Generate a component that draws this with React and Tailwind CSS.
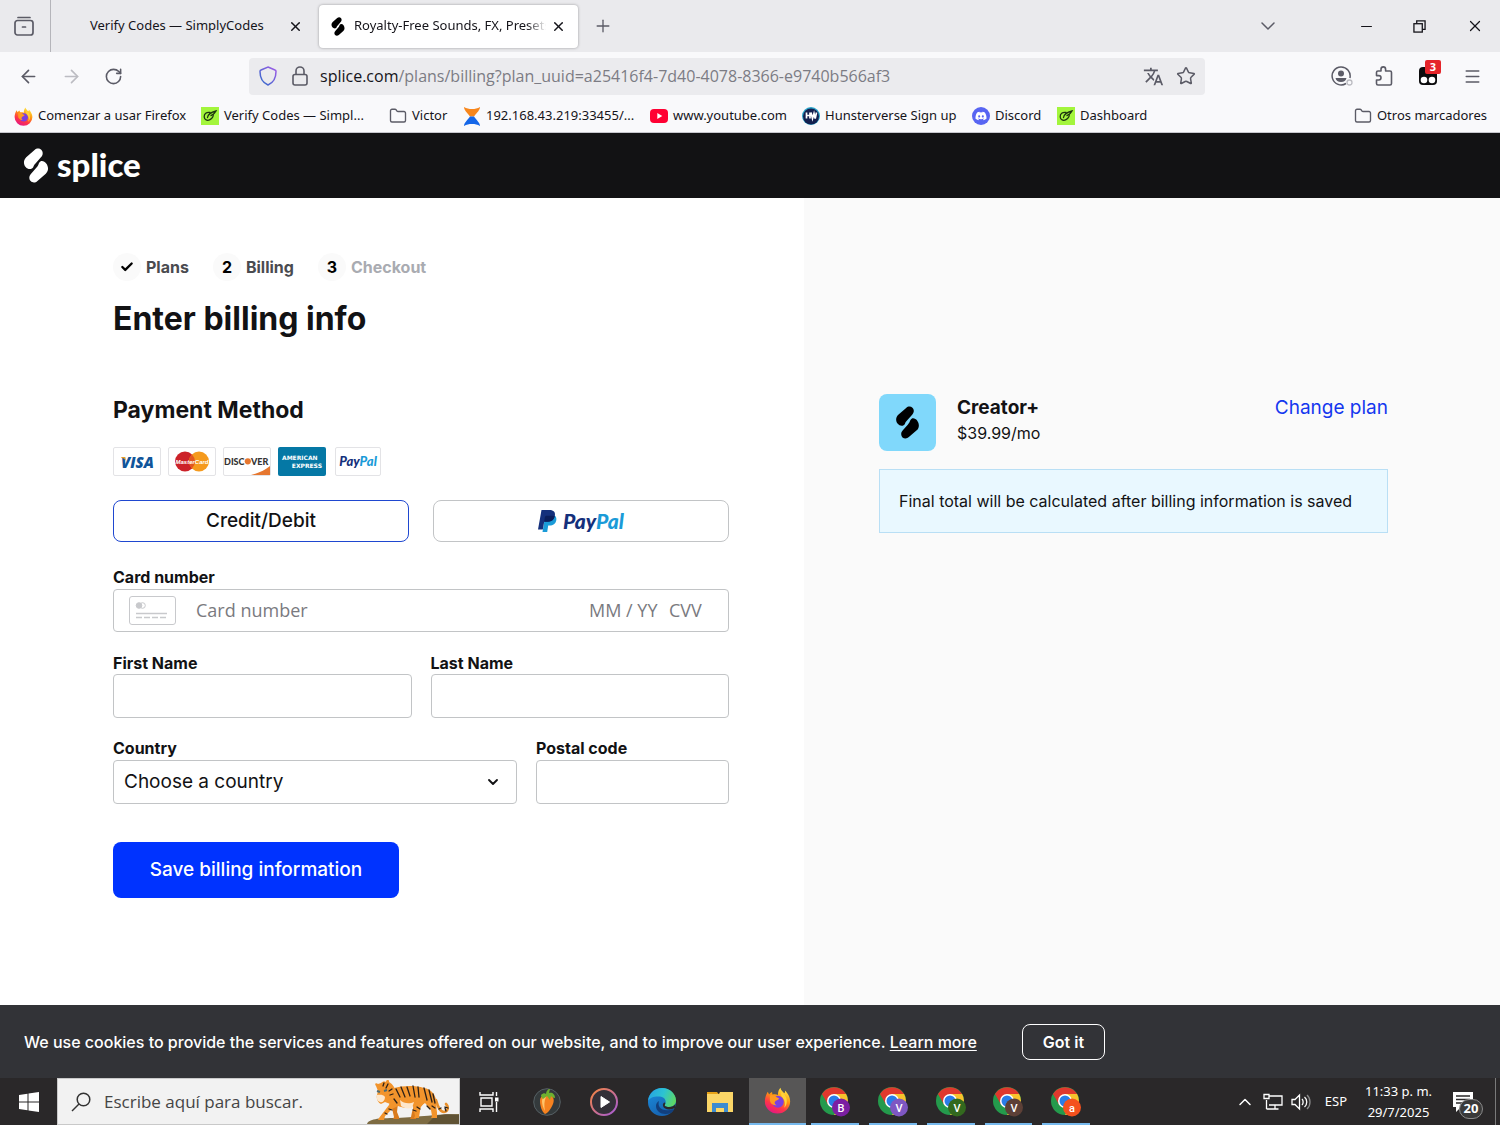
import React from "react";
import { ArrowLeft, ArrowRight, ChevronDown, ChevronUp, Folder, Menu, Minus, Plus, RotateCw, Star, X, Check } from "lucide-react";
import { FaDiscord } from "react-icons/fa";
import { MdTranslate } from "react-icons/md";

const ui = "font-['Noto_Sans','Open_Sans',sans-serif]";

function SpliceMark({ className }) {
  return (
    <svg viewBox="0 0 24 34" className={className} fill="currentColor" aria-hidden="true">
      <path d="M10.600 2C13.500-.9 18.500.8 18.500 5c0 1.600-.6 2.800-1.700 4l-5.300 6C8.500 18 10.500 19 7 20.300 3.500 21 .3 17.800.3 14c0-2 .8-3.700 2.200-5.100z" />
      <path d="M13.400 32C10.500 34.900 5.500 33.200 5.500 29c0-1.600.6-2.800 1.700-4l5.300-6C15.500 16 13.500 15 17 12.700c3.500-.7 6.700 3.500 6.700 7.300 0 2-.8 3.700-2.200 5.100z" />
    </svg>
  );
}

function FirefoxIcon({ className, id }) {
  return (
    <svg viewBox="0 0 32 32" className={className} aria-hidden="true">
      <defs>
        <linearGradient id={id} x1="0.8" y1="0" x2="0.3" y2="1">
          <stop offset="0" stopColor="#fff44f" />
          <stop offset="0.4" stopColor="#ff980e" />
          <stop offset="0.7" stopColor="#ff3647" />
          <stop offset="1" stopColor="#e31587" />
        </linearGradient>
      </defs>
      <path fill={`url(#${id})`} d="M19.500 1c.5 3 2.600 4.400 4.500 6.300 1-.9 1-2.300.8-3.300 3.400 3 6.200 8 6.200 13A15 14.500 0 0 1 16 31.500 15 14.500 0 0 1 1 17C1 12 3 8 4.500 5.500L6 9c1-1.500 2-2.300 3.500-3L10 9c2-.5 4.500-.5 6.500.5 0-3.500 1-6.500 3-8.500z" />
      <circle cx="16.500" cy="17.500" r="7" fill="#7b3fe0" />
      <path fill="#ff9a20" d="M7 10c3-1 6 0 8 2l3 1.500c-1 2-4 2-5 4-1 1.500 0 3.500 2 4-4 1-8-2-8-6z" />
      <path fill="#ffd23a" d="M21 6c4 3 6.500 7 6 12-.3 3-1.500 5-3 6.500 1.500-4 1-9-2-12-2-2-2-4.500-1-6.500z" />
    </svg>
  );
}

function LeafBadge() {
  return (
    <svg viewBox="0 0 18 18" className="size-[18px]" aria-hidden="true">
      <rect width="18" height="18" fill="#a3f53c" />
      <g fill="none" stroke="#1d3510" strokeWidth="1.300" strokeLinecap="round">
        <path d="M9 5.500C5.500 4.800 3 7 3.200 10c.2 2.800 3 4.200 5.800 2.600 2.500-1.500 3.400-3.500 3.200-5" />
        <path d="M6.500 10.500c.5-3.500 3.500-5.300 8.500-6.500-1 2-2.500 3.700-5 4.700" />
      </g>
    </svg>
  );
}

const bookmarks = [
  { label: "Comenzar a usar Firefox", icon: <FirefoxIcon id="ff-bookmark" className="size-[19px]" />, w: "w-[187px]" },
  { label: "Verify Codes — Simpl...", icon: <LeafBadge />, w: "w-[188px]" },
  { label: "Victor", icon: <Folder className="size-[18px] text-[#5b5b66]" strokeWidth={1.8} />, w: "w-[74px]" },
  {
    label: "192.168.43.219:33455/...",
    icon: (
      <svg viewBox="0 0 18 19" className="h-[19px] w-[18px]" aria-hidden="true">
        <path fill="#f7861c" d="M1 0c2.500 1.500 5 2 8 2s5.500-.5 8-2c0 3-3 5.500-6 9.500H7C4 5.500 1 3 1 0z" />
        <path fill="#1466e8" d="M1 19c2.500-1.500 5-2 8-2s5.500.5 8 2c0-3-3-5.500-6-9.500H7C4 13.500 1 16 1 19z" />
      </svg>
    ),
    w: "w-[187px]",
  },
  {
    label: "www.youtube.com",
    icon: (
      <svg viewBox="0 0 18 14" className="h-[14px] w-[18px]" aria-hidden="true">
        <rect width="18" height="14" rx="4" fill="#ff0033" />
        <path d="M7.300 4v6l5-3z" fill="#fff" />
      </svg>
    ),
    w: "w-[152px]",
  },
  {
    label: "Hunsterverse Sign up",
    icon: (
      <svg viewBox="0 0 18 18" className="size-[18px]" aria-hidden="true">
        <circle cx="9" cy="9" r="9" fill="#2aa3c9" />
        <circle cx="9" cy="9.500" r="8" fill="#14204f" />
        <path d="M4.500 5.500v6M8 5.500v6M4.500 8.500H8M9 5.500l1.500 6 1.500-5 1.200 5 1.300-6" stroke="#fff" strokeWidth="1.700" fill="none" />
      </svg>
    ),
    w: "w-[170px]",
  },
  {
    label: "Discord",
    icon: (
      <span className="flex size-[18px] items-center justify-center rounded-full bg-[#5865f2] text-white">
        <FaDiscord className="size-3" />
      </span>
    ),
    w: "w-[85px]",
  },
  { label: "Dashboard", icon: <LeafBadge />, w: "w-[100px]" },
];

function BrowserChrome() {
  return (
    <div className={`${ui} text-[#15141a]`}>
      <div className="flex h-[52px] items-center bg-[#eaeaed]">
        <button aria-label="Recent" className="flex h-full w-[51px] items-center justify-center border-r border-[#b5b5ba] pr-[2px] text-[#5b5b66]">
          <svg viewBox="0 0 20 20" className="size-5" fill="none" stroke="currentColor" strokeWidth="1.700" strokeLinecap="round" aria-hidden="true">
            <path d="M4 1.500h12" />
            <rect x="1" y="4.500" width="18" height="14.500" rx="2.500" />
            <path d="M8.500 11h3" />
          </svg>
        </button>
        <div className="flex h-11 w-[268px] items-center justify-between pr-4 pl-[39px]">
          <span className="text-[13px] whitespace-nowrap">Verify Codes — SimplyCodes</span>
          <button aria-label="Close tab"><X className="size-[15px]" strokeWidth={2.4} /></button>
        </div>
        <div className="flex h-[43px] w-[259px] items-center rounded-[4px] bg-white pr-3 pl-3 shadow-[0_0_3px_rgba(0,0,0,0.35)]">
          <SpliceMark className="h-[19px] w-[14px] shrink-0 text-black" />
          <span className="ml-[9px] w-[197px] overflow-hidden [mask-image:linear-gradient(to_right,black_90%,transparent)] text-[13px] whitespace-nowrap">Royalty-Free Sounds, FX, Presets</span>
          <button aria-label="Close tab" className="ml-[5px]"><X className="size-[15px]" strokeWidth={2.4} /></button>
        </div>
        <button aria-label="New tab" className="ml-[15px] text-[#5b5b66]"><Plus className="size-5" strokeWidth={1.6} /></button>
        <div className="ml-auto flex items-center">
          <button aria-label="List tabs" className="mr-[78px] text-[#5b5b66]"><ChevronDown className="size-6" strokeWidth={1.5} /></button>
          <button aria-label="Minimize" className="flex w-[54px] justify-start"><Minus className="size-[17px]" strokeWidth={1.5} /></button>
          <button aria-label="Restore" className="flex w-[54px] justify-start pl-px">
            <svg viewBox="0 0 14 14" className="size-[13px]" fill="none" stroke="currentColor" strokeWidth="1.400" aria-hidden="true">
              <rect x="1" y="4" width="9" height="9" />
              <path d="M4 4V1h9v9h-3" />
            </svg>
          </button>
          <button aria-label="Close window" className="mr-4"><X className="size-[18px]" strokeWidth={1.6} /></button>
        </div>
      </div>

      <div className="flex h-12 items-center bg-[#f9f9fb] text-[#5b5b66]">
        <div className="flex w-[249px] items-center gap-[22px] pl-[18px]">
          <button aria-label="Back"><ArrowLeft className="size-[21px]" strokeWidth={1.9} /></button>
          <button aria-label="Forward" className="text-[#bcbcc2]"><ArrowRight className="size-[21px]" strokeWidth={1.9} /></button>
          <button aria-label="Reload"><RotateCw className="size-[19px]" strokeWidth={2} /></button>
        </div>
        <div className="flex h-[37px] w-[956px] items-center rounded-[4px] bg-[#ebebee] pr-[9px] pl-[10px]">
          <svg viewBox="0 0 18 20" className="h-5 w-[18px]" fill="none" strokeWidth="1.500" aria-hidden="true">
            <defs>
              <linearGradient id="shield" x1="1" y1="0" x2="0" y2="1">
                <stop offset="0" stopColor="#a35be8" />
                <stop offset="1" stopColor="#2c6cc8" />
              </linearGradient>
            </defs>
            <path stroke="url(#shield)" d="M9 1l7 3c1 .4 1 1 1 1.600C17 12 14 17 9 19 4 17 1 12 1 5.600 1 5 1 4.400 2 4z" />
          </svg>
          <svg viewBox="0 0 16 20" className="ml-[15px] h-5 w-4" fill="none" stroke="currentColor" strokeWidth="1.600" aria-hidden="true">
            <rect x="1" y="8.500" width="14" height="10.500" rx="2" />
            <path d="M4 8.500V5a4 4 0 0 1 8 0v3.500" />
          </svg>
          <div className="ml-3 flex-1 font-['Open_Sans',sans-serif] text-[16px] whitespace-nowrap text-[#7c7c84]" role="textbox" aria-label="Address">
            <span className="text-[#15141a]">splice.com</span>/plans/billing?plan_uuid=a25416f4-7d40-4078-8366-e9740b566af3
          </div>
          <button aria-label="Translate page"><MdTranslate className="size-[21px]" /></button>
          <button aria-label="Bookmark page" className="ml-3"><Star className="size-5" strokeWidth={1.8} /></button>
        </div>
        <div className="ml-auto flex items-center pr-[18px]">
          <button aria-label="Account">
            <svg viewBox="0 0 22 20" className="h-5 w-[22px]" fill="none" stroke="currentColor" strokeWidth="1.500" aria-hidden="true">
              <path d="M15 17.500A9 9 0 1 1 18.900 12" />
              <circle cx="10" cy="7.500" r="3" fill="currentColor" stroke="none" />
              <path d="M4.500 12h11c-.5 2.500-2.500 4-5.500 4s-5-1.500-5.500-4z" fill="currentColor" stroke="none" />
              <circle cx="18.500" cy="16.500" r="2.500" stroke="#bcbcc2" strokeWidth="1.300" />
            </svg>
          </button>
          <button aria-label="Extensions" className="ml-[22px]">
            <svg viewBox="0 0 18 20" className="h-5 w-[18px]" fill="none" stroke="currentColor" strokeWidth="1.600" strokeLinejoin="round" aria-hidden="true">
              <path d="M1.500 6.500c0-1 .5-1.500 1.500-1.500h3V3.200a2.300 2.300 0 0 1 4.600 0V5H15c1 0 1.500.5 1.500 1.500V17.500c0 1-.5 1.500-1.500 1.500H3c-1 0-1.500-.5-1.500-1.500V14h2.300a2.200 2.200 0 0 0 0-4.400H1.500z" />
            </svg>
          </button>
          <button aria-label="Container extension" className="relative ml-[26px]">
            <svg viewBox="0 0 18 18" className="size-[18px]" aria-hidden="true">
              <rect width="18" height="18" rx="4" fill="#0c0c0d" />
              <circle cx="5" cy="13" r="3.300" fill="#fff" />
              <circle cx="13" cy="13" r="3.300" fill="#fff" />
            </svg>
            <span className="absolute -top-[7px] left-[6px] flex h-[14px] w-4 items-center justify-center rounded-[2px] bg-[#e5252a] text-[11px] font-bold text-white">3</span>
          </button>
          <button aria-label="Menu" className="ml-[26px]"><Menu className="size-[19px]" strokeWidth={1.7} /></button>
        </div>
      </div>

      <nav aria-label="Bookmarks" className="flex h-[33px] items-center border-b border-[#c6c6cc] bg-[#f9f9fb] pl-[14px] text-[13px]">
        {bookmarks.map((b, i) => (
          <a key={i} href="#bookmark" className={`flex items-center gap-[5px] whitespace-nowrap ${b.w}`}>
            {b.icon}
            {b.label}
          </a>
        ))}
        <a href="#others" className="mr-[13px] ml-auto flex items-center gap-[5px] whitespace-nowrap">
          <Folder className="size-[18px] text-[#5b5b66]" strokeWidth={1.8} />
          Otros marcadores
        </a>
      </nav>
    </div>
  );
}

function PayPalWord({ className }) {
  return (
    <span className={`font-['Lato',sans-serif] font-black italic ${className}`}>
      <span className="text-[#14307c]">Pay</span>
      <span className="text-[#1a9bd8]">Pal</span>
    </span>
  );
}

function CardLogos() {
  const box = "flex h-[29px] items-center justify-center rounded-[2px] border border-[#e3e3e6] bg-white";
  return (
    <div className="mt-[21px] flex gap-[7px]">
      <div className={`${box} w-12`}>
        <svg viewBox="0 0 46 27" className="h-[27px] w-[46px]" role="img" aria-label="Visa">
          <text x="7" y="20" fontFamily="Open Sans, sans-serif" fontSize="15" fontWeight="800" fontStyle="italic" fill="#10559a">VISA</text>
          <path d="M7 9h4l1.500 4.500C11.500 11 9.500 9.700 7 9.400z" fill="#f0a020" />
        </svg>
      </div>
      <div className={`${box} w-12`}>
        <svg viewBox="0 0 46 27" className="h-[27px] w-[46px]" role="img" aria-label="MasterCard">
          <circle cx="16" cy="13.500" r="10" fill="#cc2229" />
          <circle cx="30" cy="13.500" r="10" fill="#f59a1d" />
          <path d="M23 6.400a10 10 0 0 1 0 14.200 10 10 0 0 1 0-14.200z" fill="#e2571f" />
          <text x="23" y="15.500" textAnchor="middle" fontFamily="Liberation Sans, sans-serif" fontSize="6" fontWeight="700" fontStyle="italic" fill="#fff">MasterCard</text>
        </svg>
      </div>
      <div className={`${box} w-12`}>
        <svg viewBox="0 0 46 27" className="h-[27px] w-[46px]" role="img" aria-label="Discover">
          <path d="M46 18v9H27c8-2 14-5 19-9z" fill="#e6772f" />
          <g fontFamily="Lato, sans-serif" fontSize="9" fontWeight="900" fill="#333">
            <text x="20.500" y="16.500" textAnchor="end">DISC</text>
            <text x="27" y="16.500">VER</text>
          </g>
          <circle cx="23.800" cy="13.300" r="3.100" fill="#e6772f" />
        </svg>
      </div>
      <div className="flex h-[29px] w-12 items-center justify-center rounded-[2px] bg-[#0578a5]">
        <svg viewBox="0 0 48 29" className="h-[29px] w-12" role="img" aria-label="American Express">
          <g fontFamily="DejaVu Sans, sans-serif" fontSize="6" fontWeight="700" fill="#fff">
            <text x="4" y="13">AMERICAN</text>
            <text x="44" y="21" textAnchor="end">EXPRESS</text>
          </g>
        </svg>
      </div>
      <div className={`${box} ml-[2px] w-[46px]`}>
        <PayPalWord className="text-[13px]" />
      </div>
    </div>
  );
}

const label = "block text-[16px] leading-5 font-bold text-[#121214]";
const field = "block h-11 w-full rounded-[4px] border border-[#c2c4c6] bg-white px-[10px] text-[19px]";
const stepBadge = "mr-[5px] flex size-7 items-center justify-center rounded-full bg-[#fafafa] text-black";

function BillingForm() {
  return (
    <form className="text-[#121214]" onSubmit={(e) => e.preventDefault()}>
      <ol className="flex items-center text-[16px] leading-7 font-bold">
        <li className="flex items-center text-[#4a4b50]">
          <span className={stepBadge}><Check className="size-[14px]" strokeWidth={4} /></span>
          Plans
        </li>
        <li className="ml-6 flex items-center text-[#4a4b50]">
          <span className={stepBadge}>2</span>
          Billing
        </li>
        <li className="ml-6 flex items-center text-[#a9abb1]">
          <span className={stepBadge}>3</span>
          Checkout
        </li>
      </ol>
      <h1 className="mt-[17px] text-[32px] leading-[42px] font-bold">Enter billing info</h1>
      <h2 className="mt-[54px] text-[23px] leading-8 font-bold">Payment Method</h2>
      <CardLogos />
      <div className="mt-6 grid grid-cols-2 gap-6">
        <button type="button" className="h-[42px] rounded-[8px] border border-[#1f47d0] text-[19px] font-medium">Credit/Debit</button>
        <button type="button" aria-label="PayPal" className="flex h-[42px] items-center justify-center gap-[6px] rounded-[8px] border border-[#c2c4c6]">
          <svg viewBox="0 0 19 22" className="h-[22px] w-[19px]" aria-hidden="true">
            <path fill="#1a9bd8" d="M16.500 5.500c1.600 1 2.200 2.600 1.800 4.700-.8 3.700-3.200 5.300-6.600 5.300h-1.500L9.200 22H4.500l2-12z" />
            <path fill="#14307c" d="M3.500 0h8c4.200 0 6 2.200 5.400 5.600-.7 4.200-3.600 6.200-7.600 6.200H6.200L4.800 19.500H0z" />
            <path fill="#0b1f5c" d="M6.800 7.500c.2-1.300.8-1.800 2-1.800h5.500c1 0 1.800.2 2.400.5-.8 3.700-3.500 5.600-7.400 5.600H6.200z" />
          </svg>
          <PayPalWord className="text-[21px] leading-[22px]" />
        </button>
      </div>

      <label htmlFor="card" className={`${label} mt-[25px]`}>Card number</label>
      <div className="mt-[2px] flex h-[43px] items-center rounded-[4px] border border-[#c2c4c6] bg-white px-[15px] font-['Open_Sans',sans-serif] text-[18px]">
        <svg viewBox="0 0 47 29" className="h-[29px] w-[47px] shrink-0" fill="none" stroke="#c8c9cc" aria-hidden="true">
          <rect x="0.500" y="0.500" width="46" height="28" rx="2.500" strokeWidth="1" />
          <circle cx="10" cy="9.500" r="2.800" fill="#c8c9cc" />
          <circle cx="13.500" cy="9.500" r="2.800" />
          <path d="M7 17.500h31" strokeWidth="1.500" />
          <path d="M7 21.500h31" strokeWidth="1.300" strokeDasharray="6 2" />
        </svg>
        <input id="card" placeholder="Card number" className="ml-5 min-w-0 flex-1 outline-none placeholder:text-[#7a7a80]" />
        <input aria-label="Expiration date" placeholder="MM / YY" className="w-20 outline-none placeholder:text-[#7a7a80]" />
        <input aria-label="CVV" placeholder="CVV" className="w-[44px] outline-none placeholder:text-[#7a7a80]" />
      </div>

      <div className="mt-[21px] grid grid-cols-2 gap-[19px]">
        <div>
          <label htmlFor="first" className={label}>First Name</label>
          <input id="first" className={`${field} mt-px`} />
        </div>
        <div>
          <label htmlFor="last" className={label}>Last Name</label>
          <input id="last" className={`${field} mt-px`} />
        </div>
      </div>

      <div className="mt-5 grid grid-cols-[404fr_193fr] gap-[19px]">
        <div>
          <label htmlFor="country" className={label}>Country</label>
          <div className="relative mt-[2px]">
            <select id="country" className={`${field} appearance-none`}>
              <option>Choose a country</option>
            </select>
            <ChevronDown className="pointer-events-none absolute top-[14px] right-4 size-4" strokeWidth={2.8} />
          </div>
        </div>
        <div>
          <label htmlFor="postal" className={label}>Postal code</label>
          <input id="postal" className={`${field} mt-[2px]`} />
        </div>
      </div>

      <button type="submit" className="mt-[38px] h-14 w-[286px] rounded-[8px] bg-[#0033ff] text-[19px] font-medium text-white">Save billing information</button>
    </form>
  );
}

function PlanSummary() {
  return (
    <div className="text-[#121214]">
      <div className="flex">
        <div className="flex size-[57px] items-center justify-center rounded-[8px] bg-[#80d8fb] text-black">
          <SpliceMark className="h-[33px] w-[25px]" />
        </div>
        <div className="ml-[21px]">
          <p className="text-[19px] leading-[27px] font-bold">Creator+</p>
          <p className="text-[16px] leading-6">$39.99/mo</p>
        </div>
        <a href="#plans" className="ml-auto text-[19px] leading-[27px] text-[#1437ef]">Change plan</a>
      </div>
      <div className="mt-[18px] border border-[#b9dff5] bg-[#e9f8ff] px-[19px] py-[19px] text-[16px] leading-6">
        Final total will be calculated after billing information is saved
      </div>
    </div>
  );
}

function Tiger() {
  return (
    <svg viewBox="0 0 92 44" className="h-[44px] w-[92px]" aria-hidden="true">
      <path d="M0 44c2-5 10-6 30-6 22-1 40-4 62-4v10z" fill="#7d6b42" />
      <path d="M68 36c8-2 16-2 24-1v9H60z" fill="#5f5234" />
      <path d="M69 20c2 7 4 12 8 12 4-.5 5-5 2-8" fill="none" stroke="#e8902c" strokeWidth="2.600" strokeLinecap="round" />
      <g fill="#d97b1d">
        <path d="M24 24l7-1-1 9 2 5v2h-6l1-2z" />
        <path d="M48 22l9 1-7 8-1 6v2h-6l1-2 1-5z" />
      </g>
      <path d="M27 8c8-2 20-3 30 0 7 1 11 6 12 12 1 5 0 8 1 12v6h-6l1-2-1-6-6-7c-3 2-5 4-5 8l-1 6v1h-5l1-2-2-10c-5 3-10 2-15 0l-6 3-7 7-1 4h-6l1-2 10-13z" fill="#f2942c" />
      <path d="M9 6c-2-2 0-4 2-2l3-1c1-1 3-2 5-1 0-3 4-2 3 0 4 2 7 7 7 13l-3 10-8-3-4 2c-3-1-5-5-4-9l1-4z" fill="#f2942c" />
      <path d="M10 15c2 0 6-1 8 2 0 4-3 6-5 5-3-1-4-4-3-7zM33 20c4 4 10 4 14 2l-2 6c-5 1-8 0-11-2z" fill="#fde7cc" />
      <path d="M29 9l4 8M34 7l4 10M40 7l3 9M46 6l2 11M51 7l1 10M57 8l3 12M62 10l3 12M66 14l2 9M27 19l3 4M22 29l3 1M60 26l3 3M65 26l3 2M50 27l3 2M46 30l3 1M18 33l2 1M17 3l-1 3M21 4l-2 4M25 9l-3 2M26 14l-3 1M74 28l-2 1M79 31l-1-3M81 28l-3-1" stroke="#2b2018" strokeWidth="1.300" fill="none" strokeLinecap="round" />
      <path d="M10 11l3 1M17 11l3-1" stroke="#4b6b74" strokeWidth="2" />
    </svg>
  );
}

function ChromeIcon({ letter, color }) {
  return (
    <svg viewBox="0 0 32 32" className="size-8" aria-hidden="true">
      <circle cx="15" cy="16" r="14" fill="#249a4c" />
      <path d="M15 16L3 9A14 14 0 0 1 27.100 9z" fill="#e0382d" />
      <path d="M15 9h12.100A14 14 0 0 1 15 30l6-10z" fill="#f8c22c" />
      <path d="M3 9l6 10.500L15 9z" fill="#e0382d" />
      <circle cx="15" cy="16" r="7" fill="#fff" />
      <circle cx="15" cy="16" r="5.500" fill="#2a7de8" />
      <circle cx="22" cy="22.500" r="9" fill={color} />
      <text x="22" y="26.500" textAnchor="middle" fontFamily="Roboto, sans-serif" fontSize="11" fontWeight="500" fill="#fff">{letter}</text>
    </svg>
  );
}

const profiles = [
  { letter: "B", color: "#7b1fa2" },
  { letter: "V", color: "#7e57c2" },
  { letter: "V", color: "#33691e" },
  { letter: "V", color: "#5d4037" },
  { letter: "a", color: "#f4511e" },
];

function Taskbar() {
  const slot = "flex h-full items-center justify-center";
  return (
    <footer className={`${ui} flex h-[47px] items-center bg-[#2a2829] text-white`}>
      <button aria-label="Start" className="flex h-full w-[57px] items-center justify-center">
        <svg viewBox="0 0 20 20" className="size-5" fill="#fff" aria-hidden="true">
          <path d="M0 3l8.500-1.300v7.800H0zM9.500 1.500L20 0v9.500H9.500zM0 10.500h8.500v7.800L0 17zM9.500 10.500H20V20L9.500 18.500z" />
        </svg>
      </button>
      <div className="flex h-full w-[403px] items-center border border-[#c9c9c9] bg-[#f2f2f2] pl-[13px] text-[#333]">
        <svg viewBox="0 0 20 20" className="size-5" fill="none" stroke="currentColor" strokeWidth="1.500" aria-hidden="true">
          <circle cx="12.500" cy="7.500" r="6.300" />
          <path d="M8 12L1 19" />
        </svg>
        <input aria-label="Buscar" placeholder="Escribe aquí para buscar." className="ml-[13px] min-w-0 flex-1 font-['Open_Sans',sans-serif] text-[17px] outline-none placeholder:text-[#454545]" />
        <Tiger />
      </div>
      <div className="grid h-full w-[635px] grid-cols-11">
        <button aria-label="Task view" className={slot}>
          <svg viewBox="0 0 20 20" className="size-5" fill="none" stroke="#fff" strokeWidth="1.400" aria-hidden="true">
            <path d="M1 0v3h13V0M1 20v-3h13v3M2 6h11v8H2zM17.500 0v4M17.500 10v10" />
            <path d="M16 5.500h3.500v4H16z" fill="#fff" stroke="none" />
          </svg>
        </button>
        <button aria-label="FL Studio" className={slot}>
          <svg viewBox="0 0 28 28" className="size-7" aria-hidden="true">
            <circle cx="14" cy="14" r="13.300" fill="#343a3c" stroke="#566064" />
            <path d="M7 13c0-5 4-7 8-6 5 0 7 4 5 9-2 5-5 9-8 10-3-2-5-8-5-13z" fill="#f58220" />
            <path d="M9 13c0-3 2-4 4-4-2 4-2 9-1 14-2-3-3-7-3-10z" fill="#ffc46b" />
            <path d="M8 7c2-2 4-2 5-1 0-3 2-5 4-5l-1 4c3-1 6 1 6 5-2 0-3-1-4-2l-1 4-3-4-4 3c-1-1-2-3-2-4z" fill="#6fb12f" />
          </svg>
        </button>
        <button aria-label="Media player" className={slot}>
          <svg viewBox="0 0 28 28" className="size-7" aria-hidden="true">
            <defs><linearGradient id="media" x1="0" y1="0" x2="1" y2="1"><stop offset="0" stopColor="#f5853f" /><stop offset="1" stopColor="#a45bd8" /></linearGradient></defs>
            <circle cx="14" cy="14" r="13" fill="#333038" stroke="url(#media)" strokeWidth="2" />
            <path d="M11 8.500v11L19.500 14z" fill="#fff" stroke="#fff" strokeLinejoin="round" />
          </svg>
        </button>
        <button aria-label="Edge" className={slot}>
          <svg viewBox="0 0 28 28" className="size-7" aria-hidden="true">
            <defs>
              <linearGradient id="edge-top" x1="0" y1="0.300" x2="1" y2="0.600"><stop offset="0" stopColor="#27a3e2" /><stop offset="0.500" stopColor="#2cc3d2" /><stop offset="1" stopColor="#5fd862" /></linearGradient>
              <linearGradient id="edge-low" x1="0" y1="0" x2="0.600" y2="1"><stop offset="0" stopColor="#1b8fe0" /><stop offset="1" stopColor="#1660ad" /></linearGradient>
            </defs>
            <circle cx="14" cy="14" r="14" fill="url(#edge-low)" />
            <path d="M0 13C1 5 7 0 14 0c8 0 14 6 14 12.500 0 4-3 6.500-7 6.500-3 0-5-1-4-2.500 1.500-2 1-7.500-5-8C7 8 2 9 0 13z" fill="url(#edge-top)" />
            <path d="M11 13c-2 6 3 12 15 8-1 2-2 3-3 4-8 3-15-1-15-7 0-2 1-4 3-5z" fill="#123f7d" />
            <path d="M17 16.500c-1 1.500 1 2.500 4 2.500 3 0 5-1 6.500-3L27 20c-5 2.500-11 1.500-12-2-.5-2 .5-3.500 2-3.500.5 1 .3 1.500 0 2z" fill="#2a2829" />
          </svg>
        </button>
        <button aria-label="File explorer" className={slot}>
          <svg viewBox="0 0 26 22" className="h-[22px] w-[26px]" aria-hidden="true">
            <path d="M0 1h10l2 2.500H0z" fill="#e8a317" />
            <path d="M0 3h12l1-2h13v20H0z" fill="#fbd667" />
            <path d="M5 21v-9h16v9h-4v-4H9v4z" fill="#3c8bd0" />
            <path d="M9 17h8v4H9z" fill="#fbd667" />
          </svg>
        </button>
        <button aria-label="Firefox" className={`${slot} border-b-2 border-[#76b9ed] bg-[#575656]`}>
          <FirefoxIcon id="ff-task" className="size-[27px]" />
        </button>
        {profiles.map((p, i) => (
          <button key={i} aria-label={`Chrome ${p.letter}`} className={`${slot} mx-[5px] border-b-2 border-[#76b9ed]`}>
            <ChromeIcon letter={p.letter} color={p.color} />
          </button>
        ))}
      </div>
      <div className="ml-auto flex h-full items-center">
        <button aria-label="Show hidden icons"><ChevronUp className="size-5" strokeWidth={1.8} /></button>
        <svg viewBox="0 0 20 18" className="ml-2 h-[18px] w-5" fill="none" stroke="#fff" strokeWidth="1.300" aria-label="Network">
          <path d="M6 3h13v9H6M3.500 7v9M3.500 16h12M12 12v4" />
          <path d="M1 1.500h5v4H1z" />
        </svg>
        <svg viewBox="0 0 20 18" className="ml-2 h-[18px] w-5" fill="none" stroke="#fff" strokeWidth="1.300" aria-label="Volume">
          <path d="M1 6.500h3L8.500 2v14L4 11.500H1zM11 6c1.500 1.500 1.500 4.500 0 6M13.500 4c3 2.500 3 7.500 0 10" />
          <path d="M16 2c4 3.500 4 10.500 0 14" stroke="#8a8a8a" />
        </svg>
        <span className="ml-[14px] text-[13px]">ESP</span>
        <div className="ml-[18px] w-[67px] text-center text-[13px] leading-[21px] whitespace-nowrap">
          <div>11:33 p. m.</div>
          <div>29/7/2025</div>
        </div>
        <button aria-label="Notifications" className="relative mr-[22px] ml-[21px]">
          <svg viewBox="0 0 20 20" className="size-5" aria-hidden="true">
            <path d="M0 0h20v15H8l-5 5v-5H0z" fill="#fff" />
            <path d="M3 4h14M3 7.500h14M3 11h9" stroke="#2a2829" strokeWidth="1.400" />
          </svg>
          <span className="absolute top-[7px] left-[6px] flex h-5 w-6 items-center justify-center rounded-full border border-[#8a8a8a] bg-[#3a3a3a] text-[13px] font-bold">20</span>
        </button>
        <span className="mr-1 h-full border-l border-[#7a7a7a]" />
      </div>
    </footer>
  );
}

export default function App() {
  return (
    <div className="flex min-h-screen flex-col bg-white font-['Inter',sans-serif]">
      <BrowserChrome />
      <header className="flex h-[65px] items-center bg-[#121214] pl-[23px] text-white">
        <SpliceMark className="h-[35px] w-[26px]" />
        <span className="ml-2 pb-1 font-['Lato',sans-serif] text-[33px] leading-9 font-black">splice</span>
      </header>
      <main className="grid flex-1 grid-cols-[804fr_696fr]">
        <section className="pt-[55px] pr-[75px] pl-[113px]">
          <BillingForm />
        </section>
        <aside className="bg-[#fafafa] pt-[196px] pr-[112px] pl-[75px]">
          <PlanSummary />
        </aside>
      </main>
      <div className="flex h-[73px] items-center bg-[#323337] pl-6 text-[16px] font-medium text-white">
        <p>
          We use cookies to provide the services and features offered on our website, and to improve our user experience.{" "}
          <a href="#learn" className="underline underline-offset-2">Learn more</a>
        </p>
        <button className="ml-[45px] h-9 rounded-[8px] border border-white px-5 font-semibold">Got it</button>
      </div>
      <Taskbar />
    </div>
  );
}
